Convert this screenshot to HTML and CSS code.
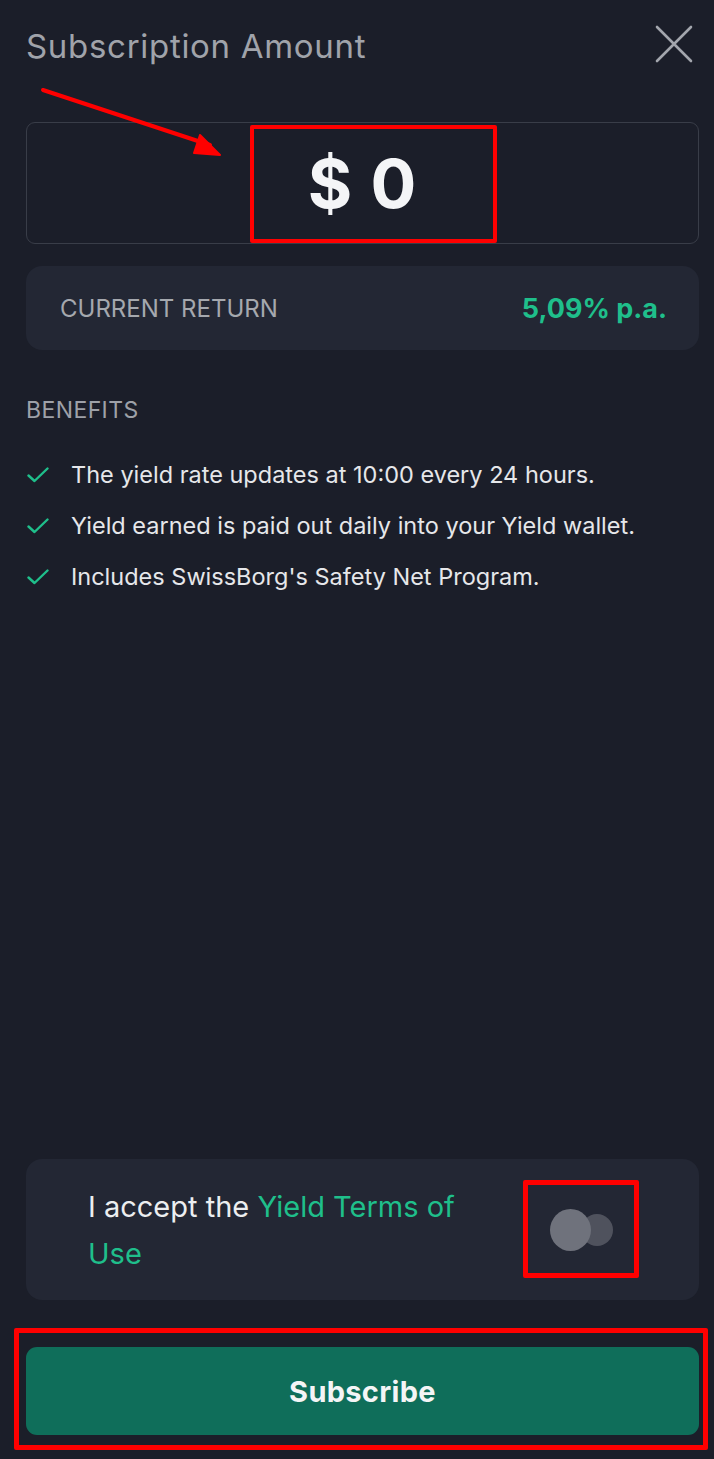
FILE: index.html
```html
<!DOCTYPE html>
<html>
<head>
<meta charset="utf-8">
<link rel="stylesheet" href="styles.css">
</head>
<body>
<div class="page">
  <header class="head">
    <h1 class="title">Subscription Amount</h1>
    <svg class="close" viewBox="0 0 38 38" width="38" height="38"><path d="M2 2 L36 36 M36 2 L2 36" stroke="#a3a6ad" stroke-width="2.6" stroke-linecap="round" fill="none"/></svg>
  </header>

  <div class="amount">$ 0</div>

  <div class="return">
    <span class="return-label">CURRENT RETURN</span>
    <span class="return-value">5,09% p.a.</span>
  </div>

  <div class="benefits-title">BENEFITS</div>
  <ul class="benefits">
    <li><svg class="check" viewBox="0 0 22 16" width="22" height="16"><path d="M1.5 8.5 L7.5 14 L20.5 1.5" stroke="#1fbf8b" stroke-width="2.4" fill="none" stroke-linecap="round" stroke-linejoin="round"/></svg>The yield rate updates at 10:00 every 24 hours.</li>
    <li><svg class="check" viewBox="0 0 22 16" width="22" height="16"><path d="M1.5 8.5 L7.5 14 L20.5 1.5" stroke="#1fbf8b" stroke-width="2.4" fill="none" stroke-linecap="round" stroke-linejoin="round"/></svg>Yield earned is paid out daily into your Yield wallet.</li>
    <li><svg class="check" viewBox="0 0 22 16" width="22" height="16"><path d="M1.5 8.5 L7.5 14 L20.5 1.5" stroke="#1fbf8b" stroke-width="2.4" fill="none" stroke-linecap="round" stroke-linejoin="round"/></svg>Includes SwissBorg's Safety Net Program.</li>
  </ul>

  <div class="spacer"></div>

  <div class="terms">
    <div class="terms-text">
      <div class="terms-line">I accept the <span class="link">Yield Terms of</span></div>
      <div class="terms-line"><span class="link">Use</span></div>
    </div>
    <div class="toggle"><span class="track"></span><span class="knob"></span></div>
  </div>

  <button class="subscribe">Subscribe</button>

  <div class="mark mark-amount"></div>
  <div class="mark mark-toggle"></div>
  <div class="mark mark-button"></div>
  <svg class="arrow" width="200" height="90" viewBox="0 0 200 90">
    <path d="M3 3 L170 58" stroke="#ff0000" stroke-width="4" stroke-linecap="round"/>
    <path d="M180 68 L160 48 L154 66 Z" fill="#ff0000" stroke="#ff0000" stroke-width="2" stroke-linejoin="round"/>
  </svg>
</div>
</body>
</html>
```

FILE: styles.css
```css
* { box-sizing: border-box; }
html, body { margin: 0; padding: 0; background: #1b1e29; }
.page {
  position: relative;
  width: 714px;
  min-height: 1459px;
  padding: 18px 15px 24px 26px;
  display: flex;
  flex-direction: column;
  font-family: Inter, "Noto Sans", sans-serif;
  color: #e8e9ec;
}
.head {
  display: flex;
  justify-content: space-between;
  align-items: center;
  height: 56px;
}
.title {
  margin: 0;
  font-size: 33px;
  font-weight: 400;
  color: #a0a3aa;
  letter-spacing: 0.7px;
}
.close { margin-right: 6px; margin-top: -4px; }
.amount {
  margin-top: 48px;
  height: 122px;
  border: 1.5px solid #393d48;
  border-radius: 9px;
  display: flex;
  align-items: center;
  justify-content: center;
  font-size: 68px;
  font-weight: 700;
  color: #f4f5f7;
  letter-spacing: 1px;
}
.return {
  margin-top: 22px;
  height: 84px;
  background: #232734;
  border-radius: 16px;
  display: flex;
  align-items: center;
  justify-content: space-between;
  padding: 0 32px 0 34px;
}
.return-label { font-size: 24px; color: #a5a8ae; }
.return-value { font-size: 27px; font-weight: 700; color: #1fbf8b; }
.benefits-title {
  margin-top: 46px;
  font-size: 23px;
  color: #9ea1a8;
  letter-spacing: 0.4px;
}
.benefits {
  list-style: none;
  margin: 36px 0 0;
  padding: 0;
  display: flex;
  flex-direction: column;
  gap: 21px;
}
.benefits li {
  display: flex;
  align-items: center;
  font-size: 23.5px;
  line-height: 30px;
  color: #e6e7ea;
}
.check { margin-right: 22px; margin-left: 1px; flex: none; }
.spacer { flex: 1; }
.terms {
  height: 141px;
  background: #232734;
  border-radius: 16px;
  display: flex;
  align-items: center;
  padding: 0 85px 0 62px;
}
.terms-text {
  font-size: 29px;
  line-height: 47px;
  color: #eceef0;
}
.link { color: #1fbf8b; }
.toggle {
  position: relative;
  margin-left: auto;
  width: 66px;
  height: 42px;
}
.track {
  position: absolute;
  left: 33px; top: 5px;
  width: 32px; height: 32px;
  border-radius: 50%;
  background: #4f525d;
}
.knob {
  position: absolute;
  left: 2px; top: 0;
  width: 41px; height: 42px;
  border-radius: 50%;
  background: #6f727c;
}
.subscribe {
  margin-top: 47px;
  height: 88px;
  border: none;
  border-radius: 11px;
  background: #0f6e5a;
  color: #f4f5f6;
  font-family: Inter, "Noto Sans", sans-serif;
  font-size: 29px;
  font-weight: 700;
  letter-spacing: 0.3px;
}
.mark {
  position: absolute;
  border: 4px solid #ff0000;
  border-radius: 2px;
}
.mark-amount { left: 250px; top: 125px; width: 247px; height: 118px; }
.mark-toggle { left: 523px; top: 1180px; width: 116px; height: 98px; border-width: 5px; }
.mark-button { left: 14px; top: 1328px; width: 694px; height: 122px; border-width: 5px; }
.arrow { position: absolute; left: 40px; top: 87px; }
```
